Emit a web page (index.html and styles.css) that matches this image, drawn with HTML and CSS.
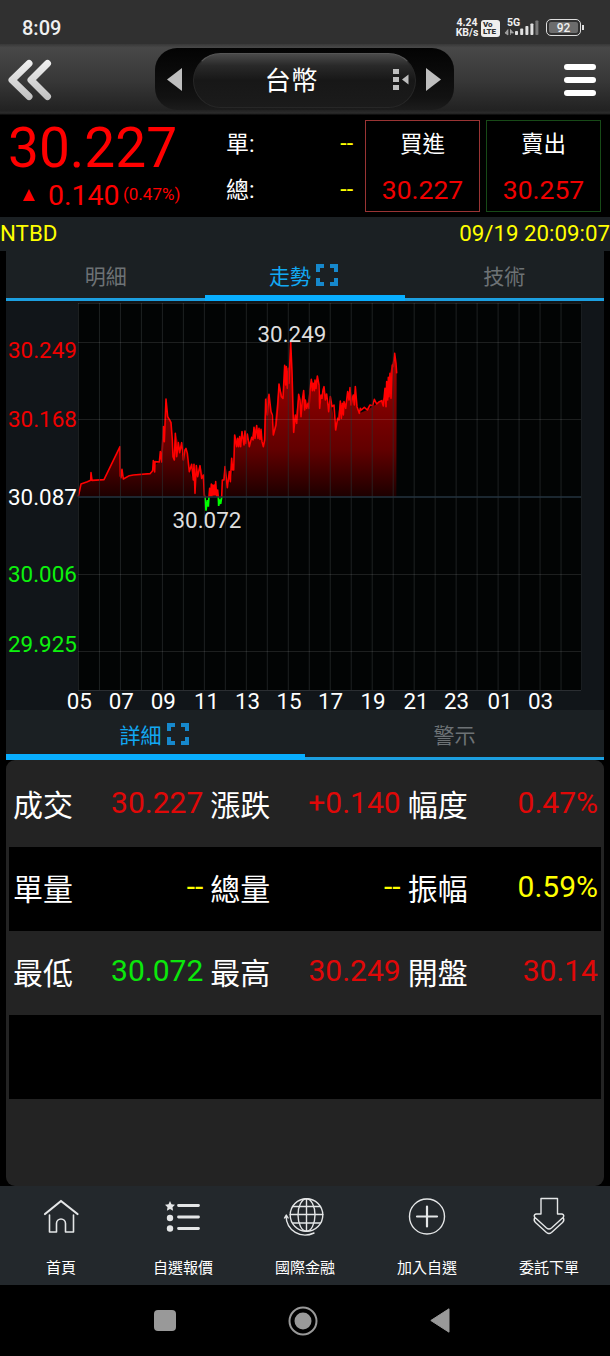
FILE: index.html
```html
<!DOCTYPE html>
<html lang="zh-Hant">
<head>
<meta charset="utf-8">
<title>台幣</title>
<link rel="stylesheet" href="styles.css">
</head>
<body>
<div class="screen">
  <header class="status">
    <span class="clock">8:09</span>
    <span class="net"><span>4.24</span><span>KB/s</span></span>
    <span class="volte"><span>Vo</span><span>LTE</span></span>
    <svg class="signal" width="34" height="24" viewBox="505 14 34 24">
      <text x="507" y="26" class="g5">5G</text>
      <path d="M505 33l3-3.500v5.500zM510.500 29.500v5.500M510.500 29.500l3 3.500h-3z" fill="#999" stroke="#bbb" stroke-width=".6"/>
      <g fill="#e0e0e0"><rect x="515" y="31" width="3" height="4" rx=".8"/><rect x="520.200" y="28.500" width="3" height="6.500" rx=".8"/><rect x="525.400" y="26" width="3" height="9" rx=".8"/><rect x="530.400" y="23.500" width="3" height="11.500" rx=".8"/></g>
      <rect x="535.400" y="20.500" width="3" height="14.500" rx=".8" fill="#777"/>
    </svg>
    <span class="battery"><b>92</b></span>
  </header>

  <div class="toolbar">
    <svg class="back" width="44" height="44" viewBox="7 58 44 44">
      <defs><linearGradient id="silver" x1="0" y1="58" x2="0" y2="102" gradientUnits="userSpaceOnUse"><stop offset="0" stop-color="#f4f4f4"/><stop offset="1" stop-color="#bdbdbd"/></linearGradient></defs>
      <path d="M29 63.500L12 80l17 16.500M47.500 63.500L31 80l16.500 16.500" fill="none" stroke="url(#silver)" stroke-width="7" stroke-linecap="round" stroke-linejoin="round"/>
    </svg>
    <div class="picker">
      <svg width="15" height="23" viewBox="0 0 15 23"><path d="M0 11.500L15 0v23z" fill="#bebebe"/></svg>
      <div class="pill"><span>台幣</span>
        <svg class="list" width="16" height="23" viewBox="0 0 16 23"><path d="M0 1h6v5H0zM0 9h6v5H0zM0 17h6v5H0zM9 11.500L15.500 6.500v10z" fill="#bebebe"/></svg>
      </div>
      <svg width="15" height="23" viewBox="0 0 15 23"><path d="M15 11.500L0 0v23z" fill="#bebebe"/></svg>
    </div>
    <div class="menu"><i></i><i></i><i></i></div>
  </div>

  <section class="quote">
    <div class="last">
      <div class="price">30.227</div>
      <div class="change"><svg width="12" height="12" viewBox="0 0 12 12"><path d="M6 0l6 12H0z" fill="#f00"/></svg><span class="diff">0.140</span><span class="pct">(0.47%)</span></div>
    </div>
    <dl class="volume">
      <div><dt>單:</dt><dd>--</dd></div>
      <div><dt>總:</dt><dd>--</dd></div>
    </dl>
    <div class="side buy"><span>買進</span><b>30.227</b></div>
    <div class="side sell"><span>賣出</span><b>30.257</b></div>
  </section>

  <div class="symbol"><span>NTBD</span><span>09/19 20:09:07</span></div>

  <nav class="tabs three">
    <span>明細</span>
    <span class="on">走勢<svg class="expand" width="22" height="22" viewBox="0 0 22 22"><path d="M2 8V2h6M14 2h6v6M20 14v6h-6M8 20H2v-6"/></svg></span>
    <span>技術</span>
  </nav>

  <svg class="chart" width="598" height="409" viewBox="6 301 598 409">
    <defs>
      <linearGradient id="area" x1="0" y1="120" x2="0" y2="590" gradientUnits="userSpaceOnUse">
        <stop offset="0" stop-color="#b00000"/><stop offset=".45" stop-color="#7c0000"/><stop offset=".7" stop-color="#620000"/><stop offset="1" stop-color="#1c0000"/>
      </linearGradient>
      <clipPath id="above"><rect x="200" y="0" width="1100" height="591"/></clipPath>
      <clipPath id="below"><rect x="200" y="591" width="1100" height="300"/></clipPath>
      <path id="trend" d="M235 590L243 552 262 545 272 541 273 518 276 541 312 539 360 440 361 528 363 533 366 508 370 537 388 527 400 525 450 521 458 512 460 482 464 516 465 485 478 486 481 455 485 486 490 380 493 425 498 297 503 350 510 362 513 368 517 420 519 470 523 480 526 400 530 470 535 428 539 458 545 428 550 480 555 450 558 445 562 460 568 515 575 493 580 540 582 493 585 580 589 497 593 530 600 497 605 535 610 525 613 585 615 592 618 632 622 600 625 620 627 588 629 565 632 588 634 552 636 588 638 555 641 585 643 555 645 585 647 545 650 588 653 570 655 592 656 618 659 598 662 612 665 592 667 540 672 540 675 500 682 563 688 515 691 545 695 475 698 510 701 510 704 405 710 440 713 415 716 440 719 410 722 440 726 395 732 435 735 393 738 430 742 402 748 440 755 412 759 420 762 382 765 415 770 377 774 415 777 385 780 418 783 388 786 425 790 440 794 420 797 298 802 345 807 283 813 335 817 345 820 405 828 375 833 320 837 252 844 290 849 295 854 196 857 255 859 200 862 265 865 205 867 250 872 125 876 215 881 397 886 345 890 370 896 283 900 300 903 350 907 300 911 272 914 330 916 300 920 325 924 310 927 325 930 270 934 238 937 272 940 250 943 272 945 240 948 265 952 228 957 255 959 325 963 285 966 295 969 270 972 260 976 300 980 282 986 335 991 290 996 320 1002 315 1007 390 1013 355 1017 360 1021 303 1024 355 1027 310 1030 345 1032 305 1037 325 1043 275 1047 300 1050 263 1053 315 1057 295 1060 285 1063 315 1066 260 1071 320 1078 340 1081 325 1084 330 1093 322 1102 330 1110 315 1118 317 1123 298 1130 312 1138 305 1145 302 1150 318 1155 265 1158 320 1160 245 1163 300 1165 232 1167 290 1170 220 1173 295 1177 195 1180 200 1184 160 1188 190 1190 220"/>
      <pattern id="cols" x="78" y="303" width="20.980" height="387" patternUnits="userSpaceOnUse"><rect width="1" height="387" fill="#2a2e2f"/></pattern>
    </defs>
    <rect x="6" y="301" width="598" height="409" fill="#111519"/>
    <rect x="78" y="303" width="503" height="387" fill="#020404"/>
    <g transform="translate(0 300) scale(.333333)">
      <path clip-path="url(#above)" fill="url(#area)" d="M235 590L243 552 262 545 272 541 276 541 312 539 360 440 361 528 370 537 388 527 450 521 460 500 478 486 485 486 490 380 493 425 498 297 503 350 513 368 519 470 526 400 535 428 550 480 558 445 568 515 580 540 600 497 610 525 615 590 665 590 668 540 675 500 682 563 691 545 701 510 704 405 722 440 735 393 748 440 762 382 780 400 790 440 797 298 807 283 820 405 837 252 849 295 854 196 867 250 872 125 881 397 896 283 903 350 911 272 920 325 934 238 945 260 952 228 959 325 972 260 986 335 991 290 1007 390 1021 303 1024 355 1050 263 1060 305 1066 260 1071 320 1078 340 1102 330 1145 302 1155 290 1170 220 1184 160 1190 220 1189 590z"/>
      <use href="#trend" clip-path="url(#above)" fill="none" stroke="#ff0000" stroke-width="4.800" stroke-linejoin="round"/>
      <use href="#trend" clip-path="url(#below)" fill="none" stroke="#00ff00" stroke-width="5"/>
    </g>
    <rect x="78" y="303" width="504" height="387" fill="url(#cols)" opacity=".65"/>
    <path d="M78 303.500H581M78 342.500H581M78 419.500H581M78 574.500H581M78 651.500H581M78 690.500H581" stroke="#fff" stroke-opacity=".11"/>
    <path d="M78 497H581" stroke="#24333f" stroke-width="1.600"/>
    <g class="axis">
      <text x="8" y="358.400" fill="#f00000">30.249</text>
      <text x="8" y="427.400" fill="#f00000">30.168</text>
      <text x="8" y="505" fill="#fff">30.087</text>
      <text x="8" y="582.300" fill="#0df20d">30.006</text>
      <text x="8" y="652.300" fill="#0df20d">29.925</text>
      <text x="257.500" y="342" fill="#ddd">30.249</text>
      <text x="172.500" y="528.400" fill="#ddd">30.072</text>
    </g>
    <g class="axis" fill="#fff" text-anchor="middle">
      <text x="79.300" y="709">05</text><text x="121.300" y="709">07</text><text x="163.300" y="709">09</text><text x="206.500" y="709">11</text><text x="247.500" y="709">13</text><text x="289" y="709">15</text><text x="330.500" y="709">17</text><text x="373" y="709">19</text><text x="416" y="709">21</text><text x="456.500" y="709">23</text><text x="500" y="709">01</text><text x="540.500" y="709">03</text>
    </g>
  </svg>

  <nav class="tabs two">
    <span class="on">詳細<svg class="expand" width="22" height="22" viewBox="0 0 22 22"><path d="M2 8V2h6M14 2h6v6M20 14v6h-6M8 20H2v-6"/></svg></span>
    <span>警示</span>
  </nav>

  <section class="details">
    <div class="row"><p>成交<b class="up">30.227</b></p><p>漲跌<b class="up">+0.140</b></p><p>幅度<b class="up">0.47%</b></p></div>
    <div class="row dark"><p>單量<b class="flat">--</b></p><p>總量<b class="flat">--</b></p><p>振幅<b class="flat">0.59%</b></p></div>
    <div class="row"><p>最低<b class="down">30.072</b></p><p>最高<b class="up">30.249</b></p><p>開盤<b class="up">30.14</b></p></div>
    <div class="row dark"></div>
  </section>

  <nav class="bottom">
    <a><svg width="40" height="40" viewBox="41 1196 40 40"><path d="M45 1214L61 1201l16.500 13" stroke-width="2.200"/><path d="M49.500 1215v17h7v-8.500a4.500 4.500 0 0 1 9 0v8.500h8v-17" stroke-width="1.600"/></svg>首頁</a>
    <a><svg width="40" height="40" viewBox="163 1196 40 40"><path d="M178.500 1205.500h20M178.500 1217h20M178.500 1228.500h20" stroke-width="2.800"/><path class="solid" d="M170 1201l1.500 3.200 3.500.5-2.500 2.500.6 3.600-3.100-1.700-3.100 1.700.6-3.600-2.500-2.500 3.500-.5z"/><circle class="solid" cx="170" cy="1218" r="3.200"/><circle class="solid" cx="170" cy="1228.500" r="3.200"/></svg>自選報價</a>
    <a><svg width="44" height="40" viewBox="283 1196 44 40"><circle cx="306.500" cy="1215" r="16.300"/><ellipse cx="306.500" cy="1215" rx="8.500" ry="16.300"/><path d="M306.500 1198.700v32.600M290.200 1214.500h32.600M293 1206.500h27M293 1223h27M286 1216c.5 15 15 23 28 17M284.500 1218l1.800-3 1.800 3"/></svg>國際金融</a>
    <a><svg width="40" height="40" viewBox="407 1196 40 40"><circle cx="427" cy="1216.500" r="17.500"/><path d="M417 1216.500h20M427 1206.500v20" stroke-width="2.200"/></svg>加入自選</a>
    <a><svg width="40" height="40" viewBox="529 1196 40 40"><path d="M541 1198.500h16.500v15.500h4.500q3 1 1 3.500l-11.500 10.500q-2.500 2-5 0L535 1217.500q-2-2.500 1-3.500h5zM534.500 1218q-1 3 1 4.500l11 10q2.500 2 5 0l11-10q2-1.500 1-4.500"/></svg>委託下單</a>
  </nav>

  <footer class="system">
    <i class="recent"></i>
    <svg width="30" height="30" viewBox="0 0 30 30"><circle cx="15" cy="15" r="13.500" fill="none" stroke="#999" stroke-width="2"/><circle cx="15" cy="15" r="8.500" fill="#999"/></svg>
    <svg width="20" height="25" viewBox="0 0 20 25"><path d="M.8 12.500L19 .8v23.400z" fill="#999" stroke="#999" stroke-linejoin="round"/></svg>
  </footer>
</div>
</body>
</html>
```
FILE: styles.css
```css
* { box-sizing: border-box; }
body { margin: 0; background: #000; font-family: "Roboto", "Noto Sans CJK TC", sans-serif; color: #fff; }
p, dl, dd { margin: 0; }
b { font-weight: 400; }
svg { display: block; flex: none; overflow: visible; }
.screen { width: 610px; height: 1356px; display: flex; flex-direction: column; overflow: hidden; }
.screen > * { flex: none; }

.status { height: 44px; background: #303030; display: flex; align-items: center; padding: 12px 29px 0 22px; color: #f0f0f0; }
.clock { font-size: 20px; font-weight: 500; line-height: 32px; margin-right: auto; }
.net { display: flex; flex-direction: column; width: 24px; margin-right: 2px; font-size: 10.500px; font-weight: 700; line-height: 10px; text-align: center; }
.volte { display: flex; flex-direction: column; width: 19px; height: 17px; margin-right: 5px; padding: 1px 2px; border-radius: 3px; background: #eee; color: #303030; font-size: 8px; font-weight: 900; line-height: 7.500px; }
.signal { margin: -4px 7px 0 0; }
.g5 { font-size: 10.500px; font-weight: 700; fill: #f0f0f0; }
.battery { position: relative; width: 35px; height: 17px; margin-top: -1px; border: 1.500px solid #ddd; border-radius: 5px; padding: 2px; }
.battery b { display: block; height: 11px; border-radius: 2px; background: #6c6c6c; font-size: 12px; font-weight: 500; line-height: 12px; text-align: center; }
.battery::after { content: ""; position: absolute; right: -4px; top: 5px; width: 2px; height: 5px; background: #ddd; }

.toolbar { height: 72px; display: flex; align-items: center; padding: 0 14px 0 7px; background: linear-gradient(#383838, #484848 5%, #383838 50%, #222 92%, #2c2c2c 96%, #000 99%); }
.picker { width: 299px; height: 62px; margin: -2px 110px 0 104px; padding: 4px 13px 0 12px; display: flex; align-items: center; justify-content: space-between; border-radius: 22px; background: linear-gradient(#030303, #121212 80%, #1c1c1c); }
.picker > svg { margin-top: -3px; }
.pill { position: relative; width: 223px; height: 55px; margin-top: -2px; border-radius: 28px; border: 1px solid #272727; border-top-color: #555; background: linear-gradient(#4a4a4a, #292929 22%, #171717 50%, #1b1b1b); font-size: 26.500px; line-height: 54px; text-align: center; }
.pill span { display: block; padding-right: 26px; }
.list { position: absolute; left: 199px; top: 14px; }
.menu { width: 32px; display: flex; flex-direction: column; gap: 7px; }
.menu i { height: 6px; border-radius: 3px; background: #fff; }

.quote { height: 101px; display: flex; align-items: flex-start; padding: 4px 9px 0; }
.last { width: 217px; color: #f00; }
.price { font-size: 55px; line-height: 56px; margin-left: -1px; white-space: nowrap; }
.change { display: flex; align-items: center; height: 38px; padding-left: 14px; }
.diff { margin-left: 13px; width: 75px; font-size: 28.500px; }
.pct { font-size: 17px; margin-top: -2px; }
.volume { width: 127px; margin-right: 12px; padding-top: 2px; }
.volume div { display: flex; justify-content: space-between; font-size: 23px; line-height: 46px; }
.volume dd { color: #ff0; margin-top: -1px; }
.side { width: 115px; height: 92px; padding-top: 1px; border: 1px solid #9a3434; display: flex; flex-direction: column; align-items: center; font-size: 22.500px; line-height: 45px; }
.side b { font-size: 26.500px; color: #f00000; }
.sell { margin-left: 6px; border-color: #174a17; }

.symbol { height: 34px; display: flex; justify-content: space-between; background: #1b2023; color: #ff0; font-size: 22.300px; line-height: 33px; }
.tabs { width: 598px; height: 50px; margin: 0 6px; display: grid; background: #1b2023; }
.three { grid-template-columns: repeat(3, 1fr); }
.two { grid-template-columns: repeat(2, 1fr); }
.tabs span { display: flex; justify-content: center; align-items: center; color: #6d7275; font-size: 21px; border-bottom: 3px solid #1c9fe0; }
.tabs .on { color: #12a8f2; border-bottom: 6px solid #08aeff; padding: 3px 3px 0 0; }
.expand { margin: 0 0 0 5px; fill: none; stroke: #1688cc; stroke-width: 4; }
.chart { margin: 0 6px; }
.axis { font-size: 22.400px; }

.details { width: 598px; height: 426px; margin: 0 6px; padding: 3px; border-radius: 9px; background: #232323; }
.row { height: 84px; display: flex; }
.row p { flex: 1; display: flex; justify-content: space-between; align-items: center; padding: 0 3px 4px 4px; font-size: 30px; }
.row b { font-size: 30px; margin-top: -1px; }
.dark { background: #000; }
.up { color: #e00808; }
.down { color: #0be80b; }
.flat { color: #ff0; }

.bottom { height: 99px; display: flex; background: #23282c; }
.bottom a { flex: 1; display: flex; flex-direction: column; align-items: center; padding-top: 10px; font-size: 15px; line-height: 18px; gap: 23px; }
.bottom svg { fill: none; stroke: #e4e6e7; stroke-width: 1.400; stroke-linecap: round; stroke-linejoin: round; }
.bottom .solid { fill: #e4e6e7; stroke: none; }
.system { height: 71px; display: flex; align-items: center; padding-left: 154px; }
.recent { width: 22px; height: 21px; border-radius: 4px; background: #999; }
.system svg { margin-left: 112px; }
```
